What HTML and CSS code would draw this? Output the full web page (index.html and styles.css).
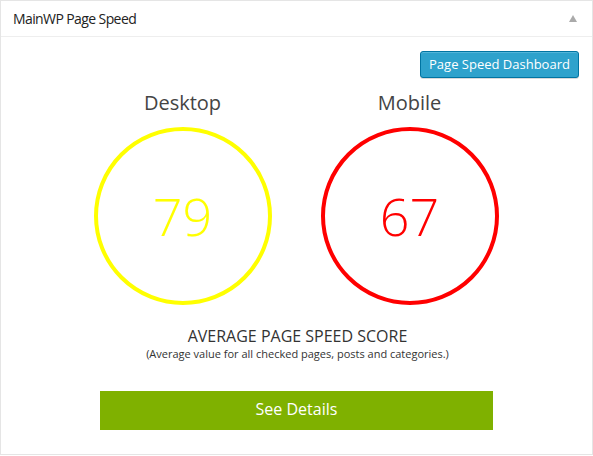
FILE: index.html
```html
<!DOCTYPE html>
<html>
<head>
<meta charset="utf-8">
<link rel="stylesheet" href="styles.css">
</head>
<body>
<div class="widget">
  <div class="widget-head">
    <h3 class="widget-title">MainWP Page Speed</h3>
    <span class="toggle"></span>
  </div>
  <div class="widget-body">
    <div class="actions">
      <a class="btn-primary">Page Speed Dashboard</a>
    </div>
    <div class="scores">
      <div class="score">
        <div class="score-label">Desktop</div>
        <div class="ring ring-yellow"><span>79</span></div>
      </div>
      <div class="score">
        <div class="score-label">Mobile</div>
        <div class="ring ring-red"><span>67</span></div>
      </div>
    </div>
    <div class="avg-title">AVERAGE PAGE SPEED SCORE</div>
    <div class="avg-note">(Average value for all checked pages, posts and categories.)</div>
    <div class="details-wrap">
      <a class="btn-details">See Details</a>
    </div>
  </div>
</div>
</body>
</html>
```
FILE: styles.css
```css
html, body {
  margin: 0;
  padding: 0;
  background: #fff;
}
body {
  font-family: "Open Sans", "Liberation Sans", sans-serif;
  color: #444;
}
.widget {
  width: 593px;
  height: 455px;
  box-sizing: border-box;
  border: 1px solid #e5e5e5;
  background: #fff;
}
.widget-head {
  height: 35px;
  border-bottom: 1px solid #eeeeee;
  display: flex;
  align-items: center;
  justify-content: space-between;
  padding: 0 12px 0 12px;
}
.widget-title {
  margin: 0;
  font-size: 14px;
  font-weight: 400;
  letter-spacing: -0.6px;
  color: #222;
  line-height: 1;
}
.toggle {
  width: 0;
  height: 0;
  border-left: 4px solid transparent;
  border-right: 4px solid transparent;
  border-bottom: 7px solid #aaa;
  margin-right: 3px;
}
.widget-body {
  padding: 14px 12px 0 12px;
}
.actions {
  display: flex;
  justify-content: flex-end;
  padding-right: 1px;
}
.btn-primary {
  display: inline-block;
  box-sizing: border-box;
  height: 27px;
  width: 159px;
  line-height: 25px;
  text-align: center;
  font-size: 13px;
  color: #fff;
  background: #2ea2cc;
  border: 1px solid #0074a2;
  border-radius: 3px;
  box-shadow: inset 0 1px 0 rgba(120,200,230,.5), 0 1px 0 rgba(0,0,0,.15);
}
.scores {
  display: flex;
  justify-content: center;
  gap: 49px;
  margin-top: 12px;
  padding-right: 1px;
}
.score {
  display: flex;
  flex-direction: column;
  align-items: center;
}
.score-label {
  font-size: 20px;
  line-height: 26px;
  color: #444;
  margin-bottom: 11px;
}
.ring {
  width: 178px;
  height: 178px;
  box-sizing: border-box;
  border-radius: 50%;
  border: 4px solid;
  display: flex;
  align-items: center;
  justify-content: center;
}
.ring span {
  font-size: 52px;
  font-weight: 300;
  line-height: 1;
}
.ring-yellow {
  border-color: #ffff00;
  color: #ffff00;
}
.ring-red {
  border-color: #ff0000;
  color: #ff0000;
}
.avg-title {
  text-align: center;
  font-size: 16px;
  color: #333;
  margin-top: 21px;
  line-height: 20px;
  padding-left: 2px;
}
.avg-note {
  text-align: center;
  font-size: 11px;
  color: #333;
  line-height: 16px;
  padding-left: 2px;
}
.details-wrap {
  margin-top: 29px;
  padding-left: 87px;
}
.btn-details {
  display: block;
  width: 393px;
  height: 39px;
  line-height: 37px;
  text-align: center;
  background: #7fb100;
  color: #fff;
  font-size: 16px;
}
```
